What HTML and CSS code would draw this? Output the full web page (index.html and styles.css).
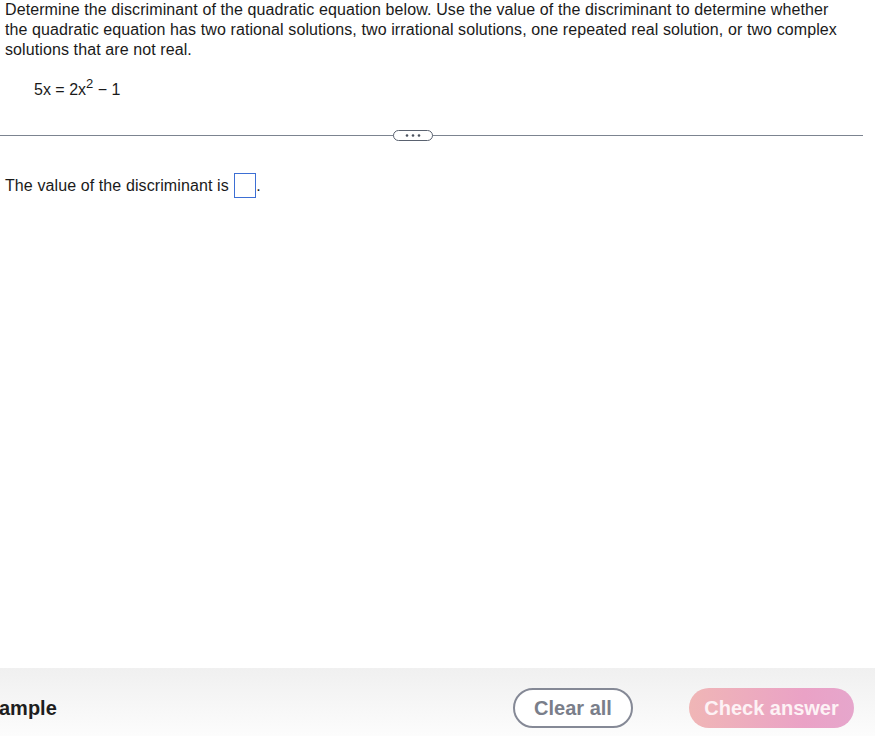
FILE: index.html
```html
<!DOCTYPE html>
<html>
<head>
  <meta charset="UTF-8">
  <title>Discriminant</title>
  <link rel="stylesheet" href="styles.css">
</head>
<body>
  <div class="page">
    <div class="question">
      <p class="prompt">Determine the discriminant of the quadratic equation below. Use the value of the discriminant to determine whether the quadratic equation has two rational solutions, two irrational solutions, one repeated real solution, or two complex solutions that are not real.</p>
      <div class="equation">5x = 2x<sup>2</sup> &minus; 1</div>
    </div>

    <div class="divider">
      <button class="more-button" type="button">
        <svg width="40" height="11" viewBox="0 0 40 11">
          <rect x="0.5" y="0.5" width="39" height="10" rx="5" fill="#fff" stroke="#5a6270"/>
          <circle cx="14" cy="5.5" r="1.3" fill="#4a525e"/>
          <circle cx="20" cy="5.5" r="1.3" fill="#4a525e"/>
          <circle cx="26" cy="5.5" r="1.3" fill="#4a525e"/>
        </svg>
      </button>
    </div>

    <div class="answer">
      The value of the discriminant is <span class="answer-box"></span>.
    </div>

    <div class="footer">
      <span class="example-link">ample</span>
      <div class="footer-actions">
        <button class="clear-button" type="button">Clear all</button>
        <button class="check-button" type="button">Check answer</button>
      </div>
    </div>
  </div>
</body>
</html>
```

FILE: styles.css
```css
html, body {
  height: 100%;
}

body {
  margin: 0;
  font-family: "Liberation Sans", Arial, sans-serif;
  font-size: 16px;
  color: #1a1a1a;
  background: white;
  overflow: hidden;
}

.page {
  height: 100%;
  display: flex;
  flex-direction: column;
}

.question {
  padding: 0 5px;
  letter-spacing: 0.1px;
}

.prompt {
  margin: 0;
  line-height: 20px;
  max-width: 836px;
}

.equation {
  margin-top: 20px;
  padding-left: 29px;
  line-height: 20px;
  letter-spacing: 0;
}

.equation sup {
  font-size: 13px;
  line-height: 0;
  vertical-align: 7px;
}

.divider {
  position: relative;
  margin-top: 35px;
  width: 863px;
  height: 1px;
  flex-shrink: 0;
  background: #7c8490;
}

.more-button {
  position: absolute;
  left: 393px;
  top: -5px;
  padding: 0;
  border: none;
  background: none;
  display: block;
  line-height: 0;
}

.answer {
  margin-top: 37px;
  padding-left: 5px;
  line-height: 20px;
  letter-spacing: 0.1px;
}

.answer-box {
  display: inline-block;
  width: 20px;
  height: 23px;
  border: 1px solid #3d6fd4;
  vertical-align: -7px;
  margin-left: 1px;
}

.footer {
  margin-top: auto;
  height: 68px;
  flex-shrink: 0;
  box-sizing: border-box;
  padding-top: 20px;
  display: flex;
  align-items: flex-start;
  justify-content: space-between;
  background: linear-gradient(to bottom, #f0f0f0, #fcfcfc);
}

.example-link {
  font-size: 20px;
  font-weight: bold;
  color: #1e1e1e;
  margin-left: -1px;
  line-height: 40px;
}

.footer-actions {
  display: flex;
  gap: 56px;
  margin-right: 21px;
}

.clear-button {
  width: 120px;
  height: 40px;
  border: 2px solid #858996;
  border-radius: 20px;
  background: white;
  font-family: "Liberation Sans", Arial, sans-serif;
  font-size: 20px;
  font-weight: bold;
  color: #7a7e8a;
  padding: 0;
}

.check-button {
  width: 165px;
  height: 40px;
  border: none;
  border-radius: 20px;
  background: linear-gradient(to right, #f0b6b6, #eaa2c6 70%, #e6a6cc);
  font-family: "Liberation Sans", Arial, sans-serif;
  font-size: 20px;
  font-weight: bold;
  color: #fdf2f5;
  padding: 0;
}
```
